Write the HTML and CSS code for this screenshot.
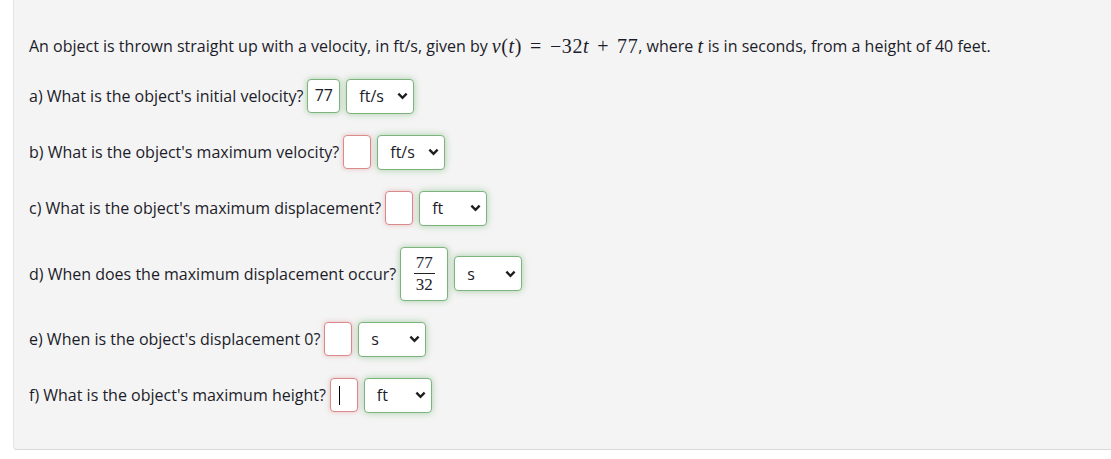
FILE: index.html
```html
<!DOCTYPE html>
<html lang="en">
<head>
<meta charset="utf-8">
<title>Vertical motion question</title>
<link rel="stylesheet" href="styles.css">
</head>
<body>
<div class="panel">
  <div class="row intro">An object is thrown straight up with a velocity, in ft/s, given by&nbsp;<span class="math"><i>v</i>(<i>t</i>)<span class="op">=</span>−32<i>t</i><span class="op">+</span>77</span>, where&nbsp;<span class="math"><i>t</i></span>&nbsp;is in seconds, from a height of 40 feet.</div>

  <div class="row">
    <span class="q">a) What is the object's initial velocity?</span>
    <span class="box ok num">77</span>
    <span class="sel ok"><span>ft/s</span><svg class="chev" viewBox="0 0 12 8"><path d="M1.5 1.5 L6 6 L10.5 1.5"/></svg></span>
  </div>

  <div class="row">
    <span class="q">b) What is the object's maximum velocity?</span>
    <span class="box bad"></span>
    <span class="sel ok"><span>ft/s</span><svg class="chev" viewBox="0 0 12 8"><path d="M1.5 1.5 L6 6 L10.5 1.5"/></svg></span>
  </div>

  <div class="row">
    <span class="q">c) What is the object's maximum displacement?</span>
    <span class="box bad"></span>
    <span class="sel ok"><span>ft</span><svg class="chev" viewBox="0 0 12 8"><path d="M1.5 1.5 L6 6 L10.5 1.5"/></svg></span>
  </div>

  <div class="row tall">
    <span class="q">d) When does the maximum displacement occur?</span>
    <span class="box ok frac"><span class="fr"><span class="n">77</span><span class="d">32</span></span></span>
    <span class="sel ok"><span>s</span><svg class="chev" viewBox="0 0 12 8"><path d="M1.5 1.5 L6 6 L10.5 1.5"/></svg></span>
  </div>

  <div class="row">
    <span class="q">e) When is the object's displacement 0?</span>
    <span class="box bad"></span>
    <span class="sel ok"><span>s</span><svg class="chev" viewBox="0 0 12 8"><path d="M1.5 1.5 L6 6 L10.5 1.5"/></svg></span>
  </div>

  <div class="row">
    <span class="q">f) What is the object's maximum height?</span>
    <span class="box bad"><span class="caret"></span></span>
    <span class="sel ok"><span>ft</span><svg class="chev" viewBox="0 0 12 8"><path d="M1.5 1.5 L6 6 L10.5 1.5"/></svg></span>
  </div>
</div>
</body>
</html>
```

FILE: styles.css
```css
html, body {
  margin: 0;
  padding: 0;
  background: #ffffff;
}

body {
  font-family: "Open Sans", "Noto Sans", "DejaVu Sans", sans-serif;
  font-size: 16px;
  color: #1c1c2a;
  overflow: hidden;
}

.panel {
  margin-left: 13px;
  width: 1120px;
  height: 450px;
  box-sizing: border-box;
  background: #f4f4f4;
  border-left: 1px solid #e4e4e4;
  border-bottom: 1px solid #d9d9d9;
  border-bottom-left-radius: 4px;
  padding: 34px 0 0 15px;
  display: flex;
  flex-direction: column;
  gap: 20px;
}

.row {
  display: flex;
  align-items: center;
  height: 36px;
  white-space: nowrap;
}

.row.intro {
  height: 24px;
  margin-bottom: 0;
}

.row.tall {
  height: 55px;
}

.q {
  margin-right: 4px;
}

.math {
  font-family: "Liberation Serif", "DejaVu Serif", serif;
  font-size: 20px;
  letter-spacing: 0.6px;
}

.math i {
  font-style: italic;
}

.op {
  margin: 0 8px;
}

.box {
  box-sizing: border-box;
  height: 34px;
  width: 28px;
  background: #fff;
  border-radius: 4px;
  display: flex;
  align-items: center;
  justify-content: center;
  margin-right: 6px;
}

.box.ok {
  border: 1px solid #7db47d;
  box-shadow: 0 0 6px rgba(60, 150, 60, 0.4);
}

.box.bad {
  border: 1px solid #d98a8a;
  box-shadow: 0 0 5px rgba(210, 90, 90, 0.35);
}

.box.num {
  width: 33px;
  font-size: 16px;
  padding-bottom: 2px;
}

.box.frac {
  width: 48px;
  height: 54px;
}

.caret {
  width: 1px;
  height: 19px;
  background: #000;
  margin-right: 8px;
}

.fr {
  display: flex;
  flex-direction: column;
  align-items: center;
  font-family: "Liberation Serif", "DejaVu Serif", serif;
  font-size: 17px;
  line-height: 19px;
}

.fr .n {
  padding: 0 2px 1px;
  border-bottom: 1px solid #222;
}

.fr .d {
  padding-top: 1px;
}

.sel {
  box-sizing: border-box;
  width: 68px;
  height: 35px;
  background: #fff;
  border-radius: 4px;
  display: flex;
  align-items: center;
  justify-content: space-between;
  padding: 0 5px 0 12px;
  font-size: 16px;
}

.sel.ok {
  border: 1px solid #7db47d;
  box-shadow: 0 0 7px rgba(60, 150, 60, 0.4);
}

.chev {
  width: 11px;
  height: 8px;
  fill: none;
  stroke: #1e1e1e;
  stroke-width: 2.6;
}
```
